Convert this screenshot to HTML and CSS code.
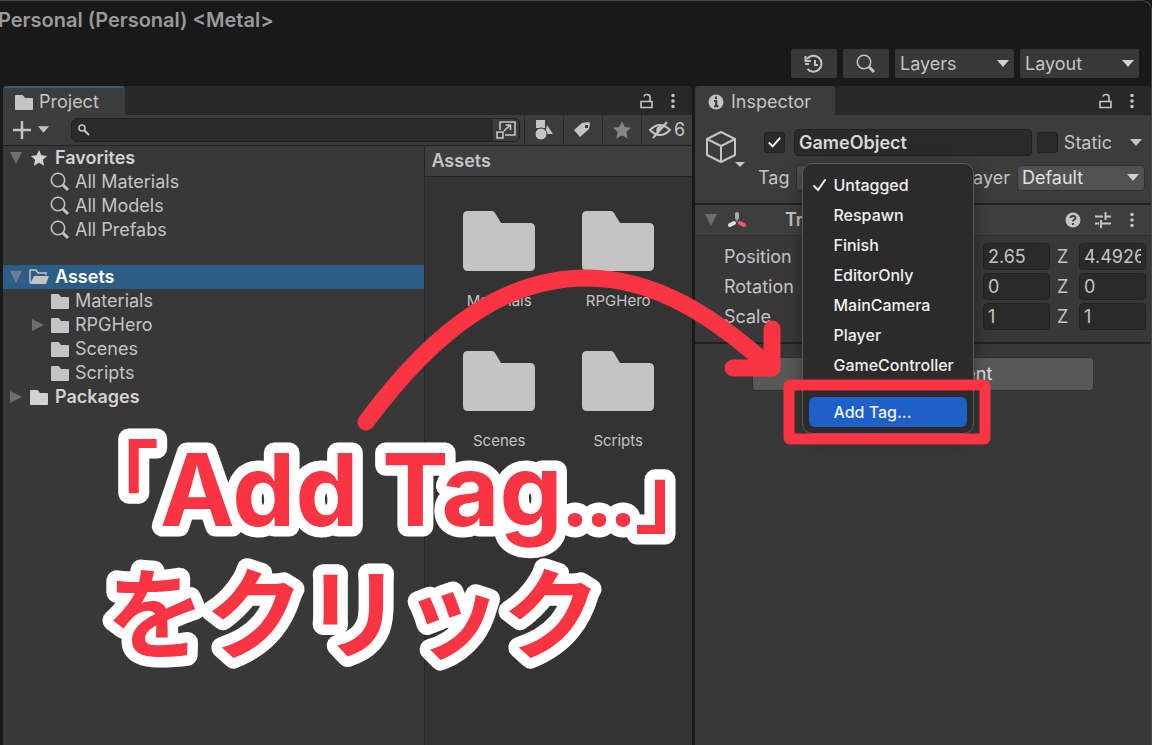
FILE: index.html
```html
<!DOCTYPE html>
<html lang="ja">

<head>
    <meta charset="UTF-8">
    <meta name="viewport" content="width=device-width, initial-scale=1.0">
    <title>Unity - Add Tag</title>
    <link rel="stylesheet" href="styles.css">
</head>

<body>
    <svg class="defs" aria-hidden="true">
        <symbol id="folder" viewBox="0 0 72 60">
            <path d="M5 0H29Q31 0 32 2L38 12H67Q72 12 72 17V55Q72 60 67 60H5Q0 60 0 55V5Q0 0 5 0Z" fill="currentColor" />
        </symbol>
        <symbol id="folder-small" viewBox="0 0 18 15">
            <path d="M1 0H7Q8 0 8.500 1L10 3H17Q18 3 18 4V14Q18 15 17 15H1Q0 15 0 14V1Q0 0 1 0Z" fill="currentColor" />
        </symbol>
        <symbol id="folder-open" viewBox="0 0 20 16">
            <path d="M1 14V1H7L9 4H17V6" fill="none" stroke="currentColor" stroke-width="1.500" />
            <path d="M5 7H20L17 15H1Z" fill="currentColor" />
        </symbol>
        <symbol id="search" viewBox="0 0 20 20">
            <circle cx="8" cy="8" r="6.700" fill="none" stroke="currentColor" stroke-width="1.500" />
            <path d="M13 13L18 18" stroke="currentColor" stroke-width="3" />
        </symbol>
        <symbol id="star" viewBox="0 0 20 20">
            <path d="M10 1L12.700 7L19 7.700L14.300 12L15.700 18.500L10 15.200L4.300 18.500L5.700 12L1 7.700L7.300 7Z" fill="currentColor" />
        </symbol>
        <symbol id="lock" viewBox="0 0 14 16">
            <path d="M1 8.500H12V14.500H1ZM10 8V4Q10 1.500 7 1.500Q4.500 1.500 4 3.500" fill="none" stroke="currentColor" stroke-width="1.600" />
        </symbol>
        <symbol id="dots" viewBox="0 0 6 16">
            <path d="M3 2.500V2.500M3 8V8M3 13.500V13.500" stroke="currentColor" stroke-width="3.600" stroke-linecap="round" />
        </symbol>
        <symbol id="down" viewBox="0 0 12 8">
            <path d="M0 0H12L6 7Z" fill="currentColor" />
        </symbol>
        <symbol id="open" viewBox="0 0 14 14">
            <path d="M1 1H13L7 13Z" fill="currentColor" />
        </symbol>
        <symbol id="closed" viewBox="0 0 14 14">
            <path d="M1 1L13 7L1 13Z" fill="currentColor" />
        </symbol>
    </svg>

    <div class="window">
        <header class="titlebar">
            <h1 class="title">Personal (Personal) &lt;Metal&gt;</h1>
            <div class="top-tools">
                <button class="tool" type="button" aria-label="History">
                    <svg width="20" height="20" viewBox="0 0 20 20" fill="none" stroke="currentColor" stroke-width="2">
                        <path d="M3 5A8 8 0 1 1 3.500 15M1.500 2V7H7M1 10H5M11 6V11H14" />
                    </svg>
                </button>
                <button class="tool" type="button" aria-label="Search">
                    <svg width="20" height="20"><use href="#search" /></svg>
                </button>
                <div class="select top-select">
                    <select aria-label="Layers"><option>Layers</option></select>
                </div>
                <div class="select top-select">
                    <select aria-label="Layout"><option>Layout</option></select>
                </div>
            </div>
        </header>

        <div class="panels">
            <section class="project">
                <div class="tabs">
                    <button class="tab tab-project" type="button">
                        <svg width="18" height="15"><use href="#folder-small" /></svg>Project
                    </button>
                    <div class="tab-tools">
                        <button type="button" aria-label="Lock"><svg width="14" height="16"><use href="#lock" /></svg></button>
                        <button type="button" aria-label="More"><svg width="6" height="16"><use href="#dots" /></svg></button>
                    </div>
                </div>
                <div class="project-bar">
                    <button class="add" type="button" aria-label="Create">
                        <svg width="18" height="18" viewBox="0 0 18 18"><path d="M9 0V18M0 9H18" stroke="currentColor" stroke-width="2.500" /></svg>
                        <svg width="11" height="8"><use href="#down" /></svg>
                    </button>
                    <div class="search">
                        <svg width="12" height="12" viewBox="0 0 12 12" fill="none" stroke="currentColor"><circle cx="4" cy="4" r="3" stroke-width="1.600" /><path d="M6 6L11 11" stroke-width="2" /></svg>
                        <input type="text" aria-label="Search project">
                        <button class="search-open" type="button" aria-label="Open search">
                            <svg width="20" height="20" viewBox="0 0 20 20" fill="none" stroke="currentColor" stroke-width="1.600">
                                <path d="M4 10V2H19V15H9M1 12H7V18H1ZM8 11L14 5M9.500 5H14.500V10" />
                            </svg>
                        </button>
                    </div>
                    <button class="filter" type="button" aria-label="Filter by type">
                        <svg width="20" height="20" viewBox="0 0 20 20" fill="currentColor">
                            <path d="M2 0H11V8H2ZM13 5L19 14H11Z" /><circle cx="7" cy="14" r="6" stroke="#3c3c3c" />
                        </svg>
                    </button>
                    <button class="filter" type="button" aria-label="Filter by label">
                        <svg width="18" height="18" viewBox="0 0 18 18">
                            <path d="M8 2L14 1Q16 1 16 3L15 8L6 16L0 9ZM11 4V7H14V4Z" fill="currentColor" fill-rule="evenodd" />
                        </svg>
                    </button>
                    <button class="filter dim" type="button" aria-label="Save search">
                        <svg width="20" height="20"><use href="#star" /></svg>
                    </button>
                    <button class="filter filter-hidden" type="button" aria-label="Hidden packages">
                        <svg width="22" height="18" viewBox="0 0 22 18" fill="none" stroke="currentColor" stroke-width="2">
                            <path d="M1 9Q11 -1 21 9Q11 19 1 9ZM4 17L18 1" /><path d="M11 6A3 3 0 0 0 9 11Z" fill="currentColor" />
                        </svg>6
                    </button>
                </div>
                <div class="browser">
                    <ul class="tree">
                        <li class="row bold"><svg class="arrow" width="14" height="14"><use href="#open" /></svg><svg width="18" height="20"><use href="#star" /></svg>Favorites</li>
                        <li class="row child"><svg width="20" height="20"><use href="#search" /></svg>All Materials</li>
                        <li class="row child"><svg width="20" height="20"><use href="#search" /></svg>All Models</li>
                        <li class="row child"><svg width="20" height="20"><use href="#search" /></svg>All Prefabs</li>
                        <li class="row bold selected"><svg class="arrow" width="14" height="14"><use href="#open" /></svg><svg width="20" height="16"><use href="#folder-open" /></svg>Assets</li>
                        <li class="row child"><svg width="20" height="15"><use href="#folder-small" /></svg>Materials</li>
                        <li class="row child has-arrow"><svg class="arrow" width="14" height="14"><use href="#closed" /></svg><svg width="20" height="15"><use href="#folder-small" /></svg>RPGHero</li>
                        <li class="row child"><svg width="20" height="15"><use href="#folder-small" /></svg>Scenes</li>
                        <li class="row child"><svg width="20" height="15"><use href="#folder-small" /></svg>Scripts</li>
                        <li class="row bold"><svg class="arrow" width="14" height="14"><use href="#closed" /></svg><svg width="18" height="15"><use href="#folder-small" /></svg>Packages</li>
                    </ul>
                    <div class="assets">
                        <h2 class="assets-title">Assets</h2>
                        <ul class="asset-grid">
                            <li><svg width="72" height="60"><use href="#folder" /></svg>Materials</li>
                            <li><svg width="72" height="60"><use href="#folder" /></svg>RPGHero</li>
                            <li><svg width="72" height="60"><use href="#folder" /></svg>Scenes</li>
                            <li><svg width="72" height="60"><use href="#folder" /></svg>Scripts</li>
                        </ul>
                    </div>
                </div>
            </section>

            <section class="inspector">
                <div class="tabs">
                    <button class="tab tab-inspector" type="button">
                        <svg width="16" height="16" viewBox="0 0 16 16"><circle cx="8" cy="8" r="7.500" fill="currentColor" /><path d="M8 2.500V5M6 7H8.200V12M6 12.200H10.500" stroke="#3c3c3c" stroke-width="2" fill="none" /></svg>Inspector
                    </button>
                    <div class="tab-tools">
                        <button type="button" aria-label="Lock"><svg width="14" height="16"><use href="#lock" /></svg></button>
                        <button type="button" aria-label="More"><svg width="6" height="16"><use href="#dots" /></svg></button>
                    </div>
                </div>
                <div class="object">
                    <button class="cube" type="button" aria-label="Icon">
                        <svg width="40" height="38" viewBox="0 0 40 38" fill="none" stroke="currentColor" stroke-width="2" stroke-linejoin="round">
                            <path d="M15 1L29 8V24L15 31L1 24V8ZM1 8L15 15L29 8M15 15V31" /><path d="M29 31H39L34 36Z" fill="currentColor" stroke="none" />
                        </svg>
                    </button>
                    <div class="object-rows">
                        <div class="object-row">
                            <input class="check" type="checkbox" aria-label="Active" checked>
                            <input class="name" type="text" aria-label="Name" value="GameObject">
                            <input class="check" type="checkbox" id="static">
                            <label for="static">Static</label>
                            <button class="static-more" type="button" aria-label="Static options"><svg width="12" height="8"><use href="#down" /></svg></button>
                        </div>
                        <div class="object-row tag-row">
                            <label for="tag">Tag</label>
                            <div class="select tag-select">
                                <select id="tag"><option>Untagged</option></select>
                                <ul class="menu" role="menu">
                                    <li role="menuitem"><svg width="14" height="14" viewBox="0 0 14 14"><path d="M1 8L5 12L12 2" fill="none" stroke="currentColor" stroke-width="2" stroke-linecap="round" /></svg>Untagged</li>
                                    <li role="menuitem">Respawn</li>
                                    <li role="menuitem">Finish</li>
                                    <li role="menuitem">EditorOnly</li>
                                    <li role="menuitem">MainCamera</li>
                                    <li role="menuitem">Player</li>
                                    <li role="menuitem">GameController</li>
                                    <li class="line" role="separator"></li>
                                    <li class="active" role="menuitem">Add Tag...</li>
                                </ul>
                            </div>
                            <label for="layer">Layer</label>
                            <div class="select layer-select">
                                <select id="layer"><option>Default</option></select>
                            </div>
                        </div>
                    </div>
                </div>
                <div class="component-head">
                    <svg class="arrow" width="14" height="14"><use href="#open" /></svg>
                    <svg width="20" height="18" viewBox="0 0 20 18" stroke-width="4" stroke-linecap="round"><path d="M10 3V7" stroke="#aaa" /><path d="M7 12L3 14" stroke="#ddd" /><path d="M13 12L17 14" stroke="#ff5560" /><circle cx="10" cy="10" r="1" fill="#4a90d9" /></svg>
                    <h2>Transform</h2>
                    <button type="button" aria-label="Help"><svg width="16" height="16" viewBox="0 0 16 16"><circle cx="8" cy="8" r="7.500" fill="currentColor" /><path d="M5.500 6Q5.500 4 8 4Q10.500 4 10.500 6Q10.500 7 9 7.800Q8 8.500 8 9.500M8 11V13" stroke="#3c3c3c" stroke-width="1.800" fill="none" /></svg></button>
                    <button type="button" aria-label="Presets"><svg width="16" height="16" viewBox="0 0 16 16"><path d="M0 4.500H8M11 4.500H16M10.500 0V8M0 11.500H4M6 11.500H16M6 8V16" stroke="currentColor" stroke-width="2" /></svg></button>
                    <button class="more" type="button" aria-label="More"><svg width="6" height="16"><use href="#dots" /></svg></button>
                </div>
                <div class="transform">
                    <div class="vector"><span>Position</span><label for="px">X</label><input id="px" type="text" value="0"><label for="py">Y</label><input id="py" type="text" value="2.65"><label for="pz">Z</label><input id="pz" type="text" value="4.492678"></div>
                    <div class="vector"><span>Rotation</span><label for="rx">X</label><input id="rx" type="text" value="0"><label for="ry">Y</label><input id="ry" type="text" value="0"><label for="rz">Z</label><input id="rz" type="text" value="0"></div>
                    <div class="vector"><span>Scale</span><label for="sx">X</label><input id="sx" type="text" value="1"><label for="sy">Y</label><input id="sy" type="text" value="1"><label for="sz">Z</label><input id="sz" type="text" value="1"></div>
                </div>
                <button class="add-component" type="button">Add Component</button>
            </section>
        </div>
    </div>

    <!-- arrow, frame and caption drawn over the editor -->
    <svg class="notes" viewBox="0 0 1152 745">
        <g class="red-line">
            <path stroke-width="17" d="M366 422C440 322 510 278 587 278C655 278 715 317 771 368M772 329V368H733" />
            <rect stroke-width="11" x="789" y="385" width="196" height="54" rx="1" />
        </g>
        <g class="caption">
            <text class="bracket" x="117" y="511">「</text>
            <text class="bracket" x="563" y="526">...」</text>
            <text x="160" y="526">Add Tag</text>
            <text class="kana" x="106" y="651">をクリック</text>
        </g>
    </svg>
</body>

</html>
```

FILE: styles.css
```css
* {
    box-sizing: border-box;
    margin: 0;
    padding: 0;
}

body {
    background: #191919;
    color: #c4c4c4;
    font-family: Inter, "Noto Sans CJK JP", sans-serif;
    font-size: 18px;
    line-height: 24px;
    overflow: hidden;
}

li {
    list-style: none;
}

button,
input,
select {
    font: inherit;
    color: inherit;
    background: none;
    border: none;
    appearance: none;
}

svg {
    flex: none;
}

.defs {
    display: none;
}

.window {
    display: flex;
    flex-direction: column;
    height: 100vh;
    border-top: 1px solid #484848;
    border-right: 1px solid #484848;
    border-top-right-radius: 10px;
}

.titlebar {
    height: 85px;
}

.title {
    height: 48px;
    padding-top: 7px;
    margin-left: -2px;
    font-size: 20px;
    font-weight: 600;
    color: #9a9a9a;
}

.top-tools {
    display: flex;
    justify-content: flex-end;
    gap: 6px;
    padding-right: 12px;
}

.tool {
    display: flex;
    align-items: center;
    justify-content: center;
    width: 46px;
    height: 29px;
    background: #383838;
    border-radius: 2px;
}

.select {
    position: relative;
}

.select select {
    width: 100%;
    height: 100%;
    padding-left: 5px;
}

.select::after {
    content: "";
    position: absolute;
    top: 50%;
    right: 5px;
    margin-top: -4px;
    border: 6px solid transparent;
    border-top: 7px solid #d0d0d0;
    border-bottom: 0;
}

.top-select {
    width: 119px;
    height: 29px;
    background: #383838;
    border-radius: 2px;
}

.panels {
    display: grid;
    grid-template-columns: 689fr 456fr;
    gap: 3px;
    flex: 1;
    min-height: 0;
    padding-left: 3px;
}

.project,
.inspector {
    display: flex;
    flex-direction: column;
    min-width: 0;
    background: #383838;
    border-radius: 4px 4px 0 0;
}

.tabs {
    display: flex;
    justify-content: space-between;
    height: 29px;
    background: #282828;
    border-radius: 4px 4px 0 0;
}

.tab {
    display: flex;
    align-items: center;
    padding-top: 1px;
    background: #3c3c3c;
    border-radius: 4px 4px 0 0;
}

.tab-project {
    gap: 6px;
    width: 122px;
    padding-left: 12px;
    border-top: 2px solid #2c5d87;
}

.tab-inspector {
    gap: 7px;
    width: 140px;
    padding-top: 2px;
    padding-left: 13px;
}

.tab-tools {
    display: flex;
    align-items: center;
    gap: 16px;
    padding-right: 16px;
}

.tab-tools button,
.component-head button {
    display: flex;
}

.project-bar {
    display: flex;
    height: 31px;
    background: #3c3c3c;
    border-bottom: 1px solid #232323;
}

.add {
    display: flex;
    align-items: center;
    gap: 7px;
    width: 68px;
    padding-left: 10px;
}

.search {
    display: flex;
    align-items: center;
    flex: 1;
    height: 24px;
    margin: 3px 4px 0 0;
    padding-left: 6px;
    background: #2a2a2a;
    border: 1px solid #212121;
    border-radius: 6px;
    overflow: hidden;
}

.search input {
    flex: 1;
    min-width: 0;
    height: 20px;
    padding-left: 8px;
}

.search-open {
    display: flex;
    align-items: center;
    justify-content: center;
    width: 26px;
    height: 24px;
    background: #3c3c3c;
}

.filter {
    display: flex;
    align-items: center;
    justify-content: center;
    width: 39px;
    border-left: 1px solid #282828;
}

.filter-hidden {
    gap: 3px;
    width: 51px;
}

.dim {
    color: #858585;
}

.browser {
    display: flex;
    flex: 1;
}

.tree {
    flex: 422;
}

.row {
    display: flex;
    align-items: center;
    gap: 5px;
    height: 24px;
    padding-left: 6px;
}

.arrow {
    color: #6e6e6e;
}

.child {
    padding-left: 47px;
}

.has-arrow {
    gap: 5px;
    padding-left: 28px;
}

.bold {
    gap: 7px;
    font-weight: 600;
    color: #d2d2d2;
}

.selected {
    gap: 6px;
    margin-top: 23px;
    background: #2c5d87;
    color: #fff;
}

.selected svg {
    color: #c4c4c4;
}

.selected .arrow {
    color: #6e7f91;
}

.assets {
    flex: 267;
    background: #333;
    border-left: 1px solid #252525;
}

.assets-title {
    height: 31px;
    padding: 3px 0 0 6px;
    background: #3e3e3e;
    border-bottom: 1px solid #262626;
    font-size: 18px;
    font-weight: 600;
}

.asset-grid {
    display: grid;
    grid-template-columns: 119px 119px;
    justify-content: center;
    row-gap: 38px;
    padding-top: 34px;
    font-size: 15px;
}

.asset-grid li {
    display: flex;
    flex-direction: column;
    align-items: center;
    gap: 18px;
}

.object {
    display: flex;
    height: 90px;
    padding: 14px 6px 0 11px;
    background: #3c3c3c;
    border-bottom: 2px solid #222;
}

.cube {
    height: 40px;
    margin-top: 2px;
}

.object-rows {
    flex: 1;
    min-width: 0;
}

.object-row {
    display: flex;
    align-items: center;
    height: 27px;
    padding-left: 18px;
}

.check {
    width: 21px;
    height: 21px;
    margin-right: 6px;
    background: #2a2a2a;
    border: 1px solid #212121;
    border-radius: 3px;
}

.check:checked {
    margin-right: 9px;
    background: #2a2a2a url("data:image/svg+xml,%3Csvg xmlns='http://www.w3.org/2000/svg' viewBox='0 0 20 20'%3E%3Cpath d='M4 10L8 14L16 5' fill='none' stroke='%23eee' stroke-width='2'/%3E%3C/svg%3E");
}

.name {
    flex: 1;
    min-width: 0;
    height: 27px;
    margin-right: 5px;
    padding-left: 4px;
    background: #2a2a2a;
    border: 1px solid #212121;
    border-radius: 4px;
    font-weight: 600;
    color: #d8d8d8;
}

.static-more {
    display: flex;
    margin-left: 18px;
    margin-right: 3px;
}

.tag-row {
    gap: 7px;
    margin-top: 8px;
    padding-left: 12px;
}

.tag-select {
    flex: 1;
    height: 26px;
    background: #515151;
    border: 1px solid #303030;
    border-radius: 4px;
}

.layer-select {
    width: 128px;
    height: 26px;
    background: #515151;
    border: 1px solid #303030;
    border-radius: 4px;
    color: #e0e0e0;
}

.layer-select select {
    padding-left: 4px;
}

.menu {
    position: absolute;
    z-index: 2;
    top: -3px;
    left: 5px;
    width: 172px;
    padding: 6px;
    background: #2b2b2b;
    border: 1px solid #5c5c5c;
    border-radius: 10px;
    box-shadow: 0 4px 16px rgba(0, 0, 0, .4);
    color: #f0f0f0;
    font-size: 16px;
    font-weight: 500;
}

.menu li {
    height: 30px;
    padding-left: 24px;
    line-height: 30px;
    border-radius: 6px;
}

.menu svg {
    float: left;
    margin: 8px 0 0 -20px;
}

.menu .line {
    height: 1px;
    margin: 8px 10px;
    background: #4a4a4a;
}

.menu .active {
    background: #1f5fc8;
}

.component-head {
    display: flex;
    align-items: center;
    height: 31px;
    padding: 0 16px 0 9px;
    background: #3e3e3e;
    border-bottom: 1px solid #303030;
}

.component-head .arrow {
    margin-right: 9px;
}

.component-head h2 {
    flex: 1;
    padding-left: 38px;
    font-size: 18px;
    font-weight: 600;
}

.component-head button + button {
    margin-left: 14px;
}

.component-head .more {
    margin-left: 18px;
}

.transform {
    display: flex;
    flex-direction: column;
    gap: 3px;
    padding: 7px 5px 12px 29px;
    border-bottom: 2px solid #222;
}

.vector {
    display: flex;
    align-items: center;
}

.vector span {
    flex: 1;
}

.vector label {
    width: 22px;
}

.vector input {
    width: 67px;
    height: 27px;
    margin-right: 7px;
    padding: 0 4px;
    background: #2a2a2a;
    border: 1px solid #212121;
    border-radius: 4px;
}

.vector input:last-child {
    margin-right: 0;
}

.add-component {
    align-self: center;
    width: 75%;
    height: 34px;
    margin-top: 13px;
    background: #585858;
    border: 1px solid #303030;
    border-radius: 4px;
    color: #e0e0e0;
}

.notes {
    position: absolute;
    z-index: 3;
    top: 0;
    left: 0;
    width: 100%;
    height: 100%;
    pointer-events: none;
}

.red-line {
    fill: none;
    stroke: #fa3543;
    stroke-linecap: round;
    stroke-linejoin: round;
}

.caption {
    fill: #fa3543;
    stroke: #fff;
    stroke-width: 21px;
    stroke-linejoin: round;
    paint-order: stroke;
    font-family: Inter, "Noto Sans CJK JP", sans-serif;
    font-size: 100px;
    font-weight: 700;
}

.bracket {
    font-family: "Open Sans", "Noto Sans CJK JP", sans-serif;
    font-size: 84px;
    font-feature-settings: "halt";
}

.kana {
    font-size: 99px;
}
```
